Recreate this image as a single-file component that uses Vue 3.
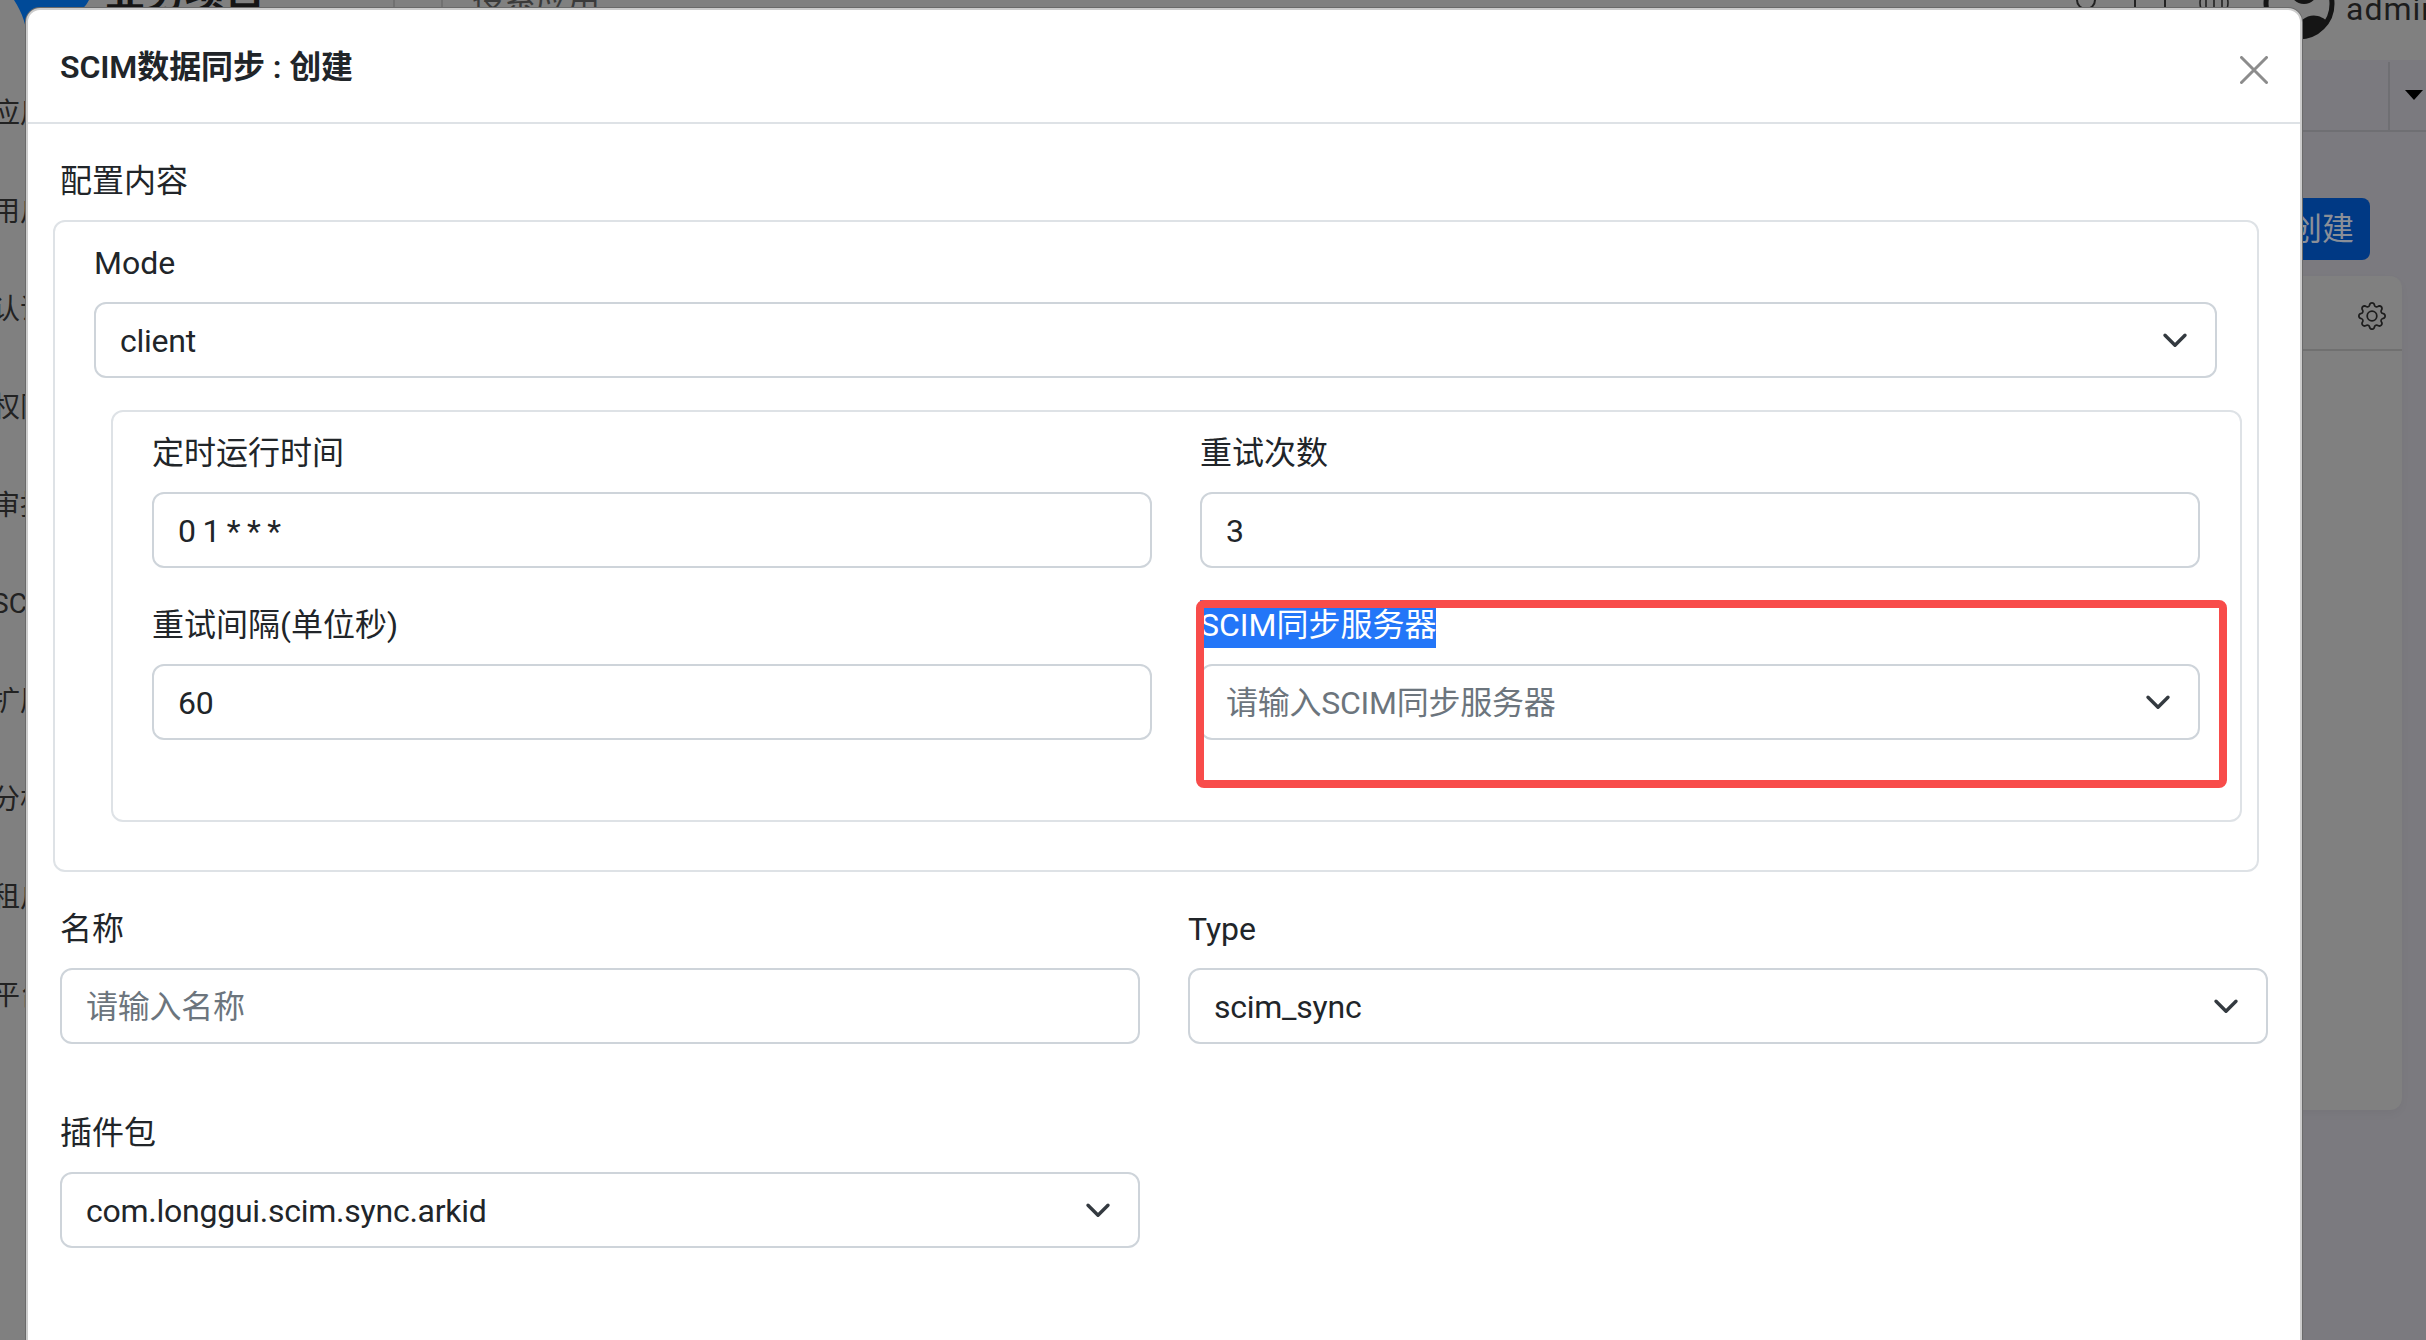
<script setup>
const menu = ['应用管理', '用户管理', '认证管理', '权限管理', '审批管理', 'SCIM同步', '扩展管理', '分析管理', '租户管理', '平台管理']
</script>

<template>
  <div class="page">
    <header class="top">
      <svg class="logo" viewBox="0 0 75 50"><path d="M0 0H75C68 14 52 20 34 21L12 40C14 28 8 12 0 0Z" fill="#004a98" /></svg>
      <span class="brand">业务项目</span>
      <i class="vline first"></i>
      <i class="vline second"></i>
      <span class="search">搜索应用</span>
      <svg class="bell" viewBox="0 0 20 20"><circle cx="10" cy="10" r="9" fill="none" stroke="#222" stroke-width="2" /></svg>
      <i class="tick t1"></i>
      <i class="tick t2"></i>
      <svg class="globe" viewBox="0 0 30 30" fill="none" stroke="#222" stroke-width="1.6"><circle cx="15" cy="15" r="14" /><path d="M15 0V30M7 2V28M23 2V28M1 5H29" /></svg>
      <svg class="avatar" viewBox="0 0 76 76">
        <circle cx="37" cy="38" r="33" fill="none" stroke="#151515" stroke-width="5" />
        <circle cx="42" cy="24" r="14" fill="#151515" />
        <path d="M40 54C50 46 60 50 66 56C60 66 50 71 40 72Z" fill="#151515" />
      </svg>
      <span class="admin">admin</span>
    </header>
    <div class="under">
      <nav class="side">
        <div v-for="item in menu" :key="item" class="side-item">{{ item }}</div>
      </nav>
      <main class="main">
        <div class="tabs"><div class="tab-end"><i class="caret"></i></div></div>
        <div class="actions"><button class="create">创建</button></div>
        <section class="table-card">
          <div class="table-head">
            <svg class="gear" viewBox="0 0 16 16" fill="#1d1d1d"><path d="M8 4.754a3.246 3.246 0 1 0 0 6.492 3.246 3.246 0 0 0 0-6.492zM5.754 8a2.246 2.246 0 1 1 4.492 0 2.246 2.246 0 0 1-4.492 0z" /><path d="M9.796 1.343c-.527-1.79-3.065-1.79-3.592 0l-.094.319a.873.873 0 0 1-1.255.52l-.292-.16c-1.64-.892-3.433.902-2.54 2.541l.159.292a.873.873 0 0 1-.52 1.255l-.319.094c-1.79.527-1.79 3.065 0 3.592l.319.094a.873.873 0 0 1 .52 1.255l-.16.292c-.892 1.64.901 3.434 2.541 2.54l.292-.159a.873.873 0 0 1 1.255.52l.094.319c.527 1.79 3.065 1.79 3.592 0l.094-.319a.873.873 0 0 1 1.255-.52l.292.16c1.64.893 3.434-.902 2.54-2.541l-.159-.292a.873.873 0 0 1 .52-1.255l.319-.094c1.79-.527 1.79-3.065 0-3.592l-.319-.094a.873.873 0 0 1-.52-1.255l.16-.292c.893-1.64-.902-3.433-2.541-2.54l-.292.159a.873.873 0 0 1-1.255-.52l-.094-.319zm-2.633.283c.246-.835 1.428-.835 1.674 0l.094.319a1.873 1.873 0 0 0 2.693 1.115l.291-.16c.764-.415 1.6.42 1.184 1.185l-.159.292a1.873 1.873 0 0 0 1.116 2.692l.318.094c.835.246.835 1.428 0 1.674l-.319.094a1.873 1.873 0 0 0-1.115 2.693l.16.291c.415.764-.42 1.6-1.185 1.184l-.291-.159a1.873 1.873 0 0 0-2.693 1.116l-.094.318c-.246.835-1.428.835-1.674 0l-.094-.319a1.873 1.873 0 0 0-2.692-1.115l-.292.16c-.764.415-1.6-.42-1.184-1.185l.159-.291A1.873 1.873 0 0 0 1.945 8.93l-.319-.094c-.835-.246-.835-1.428 0-1.674l.319-.094A1.873 1.873 0 0 0 3.06 4.377l-.16-.292c-.415-.764.42-1.6 1.185-1.184l.292.159a1.873 1.873 0 0 0 2.692-1.115l.094-.319z" /></svg>
          </div>
        </section>
      </main>
    </div>

    <div class="modal">
      <div class="modal-head">
        <h5 class="modal-title">SCIM数据同步 : 创建</h5>
        <svg class="close" viewBox="0 0 28 28"><path d="M1.5 1.5L26.5 26.5M26.5 1.5L1.5 26.5" stroke="#8c8c8c" stroke-width="3" stroke-linecap="round" /></svg>
      </div>
      <div class="modal-body">
        <label class="lbl">配置内容</label>
        <div class="outer">
          <label class="lbl">Mode</label>
          <div class="ctl select"><span>client</span><svg class="chev" viewBox="0 0 16 16"><path d="M3 5.6L8 10.6L13 5.6" /></svg></div>
          <div class="inner">
            <div class="field">
              <label class="lbl">定时运行时间</label>
              <div class="ctl"><span class="cron">0 1 * * *</span></div>
            </div>
            <div class="field">
              <label class="lbl">重试次数</label>
              <div class="ctl"><span>3</span></div>
            </div>
            <div class="field">
              <label class="lbl">重试间隔(单位秒)</label>
              <div class="ctl"><span>60</span></div>
            </div>
            <div class="field">
              <label class="lbl"><span class="selected">SCIM同步服务器</span></label>
              <div class="ctl select"><span class="ph">请输入SCIM同步服务器</span><svg class="chev" viewBox="0 0 16 16"><path d="M3 5.6L8 10.6L13 5.6" /></svg></div>
              <div class="mark"></div>
            </div>
          </div>
        </div>
        <div class="bottom">
          <div class="field">
            <label class="lbl">名称</label>
            <div class="ctl"><span class="ph">请输入名称</span></div>
          </div>
          <div class="field">
            <label class="lbl">Type</label>
            <div class="ctl select"><span>scim_sync</span><svg class="chev" viewBox="0 0 16 16"><path d="M3 5.6L8 10.6L13 5.6" /></svg></div>
          </div>
          <div class="field">
            <label class="lbl">插件包</label>
            <div class="ctl select"><span>com.longgui.scim.sync.arkid</span><svg class="chev" viewBox="0 0 16 16"><path d="M3 5.6L8 10.6L13 5.6" /></svg></div>
          </div>
        </div>
      </div>
    </div>
  </div>
</template>

<style scoped>
.page {
  position: relative;
  width: 2426px;
  height: 1340px;
  overflow: hidden;
  background: #7b7a7f;
  font-family: Roboto, "Noto Sans CJK SC", sans-serif;
  font-size: 32px;
  line-height: 48px;
  color: #212529;
  box-sizing: border-box;
}
.top {
  display: flex;
  align-items: flex-start;
  height: 60px;
  background: #808080;
  overflow: hidden;
  white-space: nowrap;
  flex-shrink: 0;
}
.logo { width: 75px; height: 50px; margin-left: 14px; flex-shrink: 0; }
.brand { margin: -26px 0 0 16px; font-size: 40px; line-height: 40px; font-weight: 700; color: #151515; flex-shrink: 0; }
.vline { width: 2px; height: 60px; background: #707070; flex-shrink: 0; }
.vline.first { margin-left: 128px; }
.vline.second { margin-left: 46px; }
.search { margin: -18px 4px 0 29px; line-height: 32px; color: #3a3a3a; flex-shrink: 0; }
.bell { width: 20px; height: 20px; margin: -10px 0 0 1472px; flex-shrink: 0; }
.tick { width: 2px; height: 8px; background: #222; flex-shrink: 0; }
.tick.t1 { margin-left: 38px; }
.tick.t2 { margin-left: 28px; }
.globe { width: 30px; height: 30px; margin: -12px 0 0 33px; flex-shrink: 0; }
.avatar { width: 76px; height: 76px; margin: -34px 0 0 33px; flex-shrink: 0; }
.admin { margin: -15px 0 0 8px; color: #1c1c1c; flex-shrink: 0; letter-spacing: 1px; }
.under { display: flex; height: 1280px; }
.side { width: 300px; flex-shrink: 0; background: #808080; padding-top: 5px; }
.side-item { height: 98px; line-height: 98px; font-size: 28px; margin-left: -8px; color: #222; white-space: nowrap; }
.main { flex: 1; display: flex; flex-direction: column; }
.tabs { height: 72px; box-sizing: border-box; border-bottom: 2px solid #6f6f73; padding-top: 2px; display: flex; justify-content: flex-end; }
.tab-end { width: 38px; border-left: 2px solid #6f6f73; display: flex; padding: 28px 0 0 15px; box-sizing: border-box; }
.caret { width: 0; height: 0; border-left: 9px solid transparent; border-right: 9px solid transparent; border-top: 10px solid #000; }
.actions { display: flex; justify-content: flex-end; padding: 66px 56px 16px 0; }
.create { width: 180px; height: 62px; border: 0; border-radius: 8px; background: #003984; color: #8a8f98; font: inherit; line-height: 62px; text-align: right; padding: 0 16px 0 0; }
.table-card { height: 834px; margin-right: 24px; background: #808080; border-radius: 12px; box-shadow: 0 4px 8px rgba(0, 0, 0, 0.04); }
.table-head { height: 75px; box-sizing: border-box; border-bottom: 2px solid #707070; display: flex; justify-content: flex-end; padding: 26px 16px 0 0; }
.gear { width: 28px; height: 28px; }

.modal {
  position: absolute;
  left: 26px;
  top: 8px;
  width: 2276px;
  height: 1400px;
  box-sizing: border-box;
  background: #fff;
  border: 2px solid #ccc;
  border-radius: 14px;
  box-shadow: 0 0 0 1px #6a6a6a;
}
.modal-head {
  display: flex;
  justify-content: space-between;
  align-items: flex-start;
  padding: 32px 32px 32px 32px;
  border-bottom: 2px solid #dee2e6;
}
.modal-title { margin: 0; font-size: 32px; height: 48px; line-height: 50px; font-weight: 600; letter-spacing: -0.1px; }
.close { width: 28px; height: 28px; margin-top: 14px; }
.modal-body { padding: 32px; }
.lbl { display: block; height: 48px; line-height: 51px; margin-bottom: 16px; }
.outer {
  margin: 0 9px 32px -7px;
  padding: 16px 40px 48px 39px;
  border: 2px solid #dee2e6;
  border-radius: 12px;
}
.inner {
  display: grid;
  grid-template-columns: 1000px 1000px;
  column-gap: 48px;
  row-gap: 32px;
  margin: 32px -25px 0 17px;
  padding: 16px 40px 80px 39px;
  border: 2px solid #dee2e6;
  border-radius: 12px;
}
.bottom {
  display: grid;
  grid-template-columns: 1080px 1080px;
  column-gap: 48px;
  row-gap: 64px;
}
.field { position: relative; min-width: 0; }
.ctl {
  display: flex;
  align-items: center;
  justify-content: space-between;
  height: 76px;
  box-sizing: border-box;
  padding: 0 24px;
  border: 2px solid #ced4da;
  border-radius: 12px;
  background: #fff;
}
.ctl span { padding-top: 2px; letter-spacing: -0.25px; }
.ph { color: #6c757d; }
.ctl .cron { letter-spacing: 0; word-spacing: -1.5px; }
.chev { width: 32px; height: 32px; flex-shrink: 0; }
.chev path { fill: none; stroke: #343a40; stroke-width: 1.7; stroke-linecap: round; stroke-linejoin: round; }
.selected { display: inline-block; height: 48px; line-height: 50px; vertical-align: top; background: #2376f8; color: #fff; }
.mark {
  position: absolute;
  left: -4px;
  right: -27px;
  top: 0;
  bottom: -48px;
  box-sizing: border-box;
  border: 8px solid #f84c4a;
  border-radius: 8px;
}
</style>
